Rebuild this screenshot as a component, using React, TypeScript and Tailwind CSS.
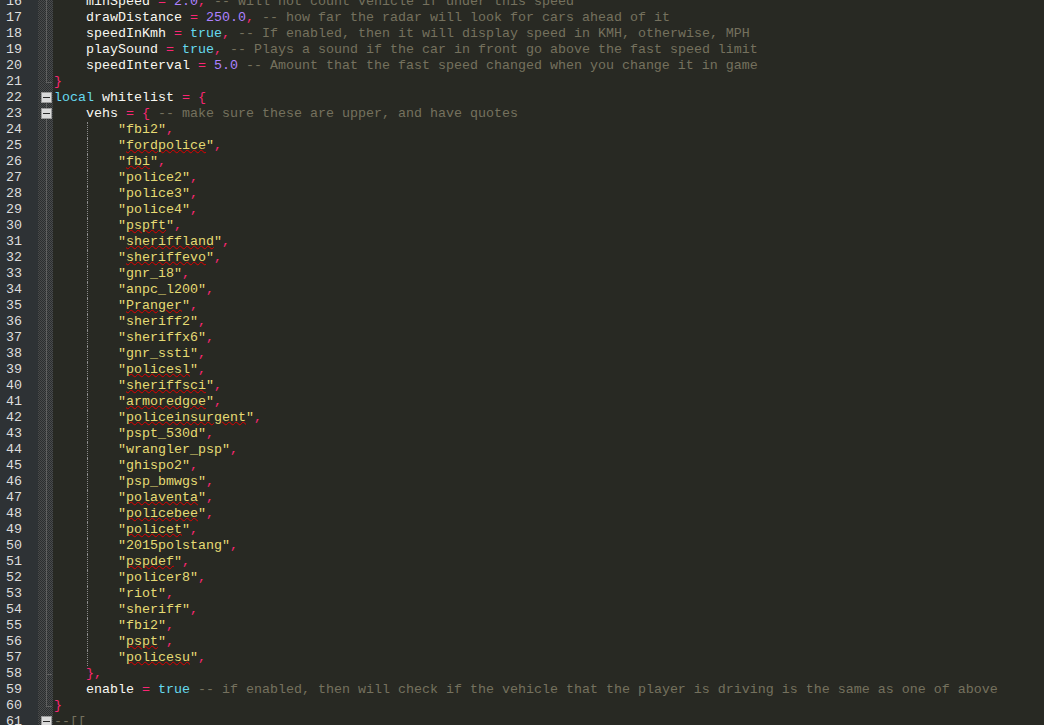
import type { ReactNode } from "react";

type Tok = [string, string?];
type Fold = "line" | "end" | "endIn" | "box" | "boxIn" | "none";

const C: Record<string, string> = {
  id: "text-[#f8f8f2]",
  op: "text-[#f92672]",
  num: "text-[#ae81ff]",
  kw: "text-[#66d9ef]",
  cm: "text-[#75715e]",
  str: "text-[#e6db74]",
};

// strings in the vehs table, second value = spell checker squiggle
const vehs: [string, boolean][] = [
  ["fbi2", false],
  ["fordpolice", true],
  ["fbi", true],
  ["police2", false],
  ["police3", false],
  ["police4", false],
  ["pspft", true],
  ["sheriffland", true],
  ["sheriffevo", true],
  ["gnr_i8", false],
  ["anpc_l200", false],
  ["Pranger", true],
  ["sheriff2", false],
  ["sheriffx6", false],
  ["gnr_ssti", false],
  ["policesl", true],
  ["sheriffsci", true],
  ["armoredgoe", true],
  ["policeinsurgent", true],
  ["pspt_530d", false],
  ["wrangler_psp", false],
  ["ghispo2", false],
  ["psp_bmwgs", false],
  ["polaventa", true],
  ["policebee", true],
  ["policet", true],
  ["2015polstang", false],
  ["pspdef", true],
  ["policer8", false],
  ["riot", false],
  ["sheriff", false],
  ["fbi2", false],
  ["pspt", true],
  ["policesu", true],
];

function FoldMark({ kind }: { kind: Fold }) {
  const line = "#5e5e5e";
  return (
    <svg width="15" height="16" className="block">
      {(kind === "line" || kind === "endIn") && <rect x="8" y="0" width="1" height="16" fill={line} />}
      {kind === "end" && <rect x="8" y="0" width="1" height="9" fill={line} />}
      {(kind === "end" || kind === "endIn") && <rect x="9" y="8" width="5" height="1" fill={line} />}
      {kind === "boxIn" && <rect x="8" y="0" width="1" height="3" fill={line} />}
      {(kind === "box" || kind === "boxIn") && (
        <>
          <rect x="8" y="13" width="1" height="3" fill={line} />
          <rect x="3.5" y="2.5" width="10" height="10" fill="#dadada" stroke="#9a9a9a" />
          <rect x="5" y="7" width="7" height="1" fill="#2a2a2a" />
        </>
      )}
    </svg>
  );
}

function Row({ n, fold, guide, children }: { n: number; fold: Fold; guide?: boolean; children: ReactNode }) {
  return (
    <div className="flex h-[16px] leading-[16px]">
      <div className="w-[38px] shrink-0 bg-[#2e3235] pl-[6px] text-[#dedede]">{n}</div>
      <div className="w-[15px] shrink-0 bg-[repeating-conic-gradient(#494b4c_0_25%,#2c2e2f_0_50%)] bg-[length:2px_2px]">
        {fold !== "none" && <FoldMark kind={fold} />}
      </div>
      <div className="flex-1 whitespace-pre pl-[1px]">
        {guide && (
          <>
            <span className="inline-block w-[32px]" />
            <span className="inline-block h-[16px] w-[31px] ml-[1px] border-l border-dotted border-[#8a8a8a] align-top" />
          </>
        )}
        {children}
      </div>
    </div>
  );
}

function Toks({ toks }: { toks: Tok[] }) {
  return (
    <>
      {toks.map(([s, k], i) => (
        <span key={i} className={C[k ?? "id"]}>
          {s}
        </span>
      ))}
    </>
  );
}

export default function App() {
  const top: { n: number; fold: Fold; toks: Tok[] }[] = [
    { n: 16, fold: "line", toks: [["    minSpeed "], ["=", "op"], [" "], ["2.0", "num"], [",", "op"], [" -- will not count vehicle if under this speed", "cm"]] },
    { n: 17, fold: "line", toks: [["    drawDistance "], ["=", "op"], [" "], ["250.0", "num"], [",", "op"], [" -- how far the radar will look for cars ahead of it", "cm"]] },
    { n: 18, fold: "line", toks: [["    speedInKmh "], ["=", "op"], [" "], ["true", "kw"], [",", "op"], [" -- If enabled, then it will display speed in KMH, otherwise, MPH", "cm"]] },
    { n: 19, fold: "line", toks: [["    playSound "], ["=", "op"], [" "], ["true", "kw"], [",", "op"], [" -- Plays a sound if the car in front go above the fast speed limit", "cm"]] },
    { n: 20, fold: "line", toks: [["    speedInterval "], ["=", "op"], [" "], ["5.0", "num"], [" -- Amount that the fast speed changed when you change it in game", "cm"]] },
    { n: 21, fold: "end", toks: [["}", "op"]] },
    { n: 22, fold: "box", toks: [["local", "kw"], [" whitelist "], ["=", "op"], [" "], ["{", "op"]] },
    { n: 23, fold: "boxIn", toks: [["    vehs "], ["=", "op"], [" "], ["{", "op"], [" -- make sure these are upper, and have quotes", "cm"]] },
  ];

  const bottom: { n: number; fold: Fold; toks: Tok[] }[] = [
    { n: 58, fold: "endIn", toks: [["    "], ["}", "op"], [",", "op"]] },
    { n: 59, fold: "line", toks: [["    enable "], ["=", "op"], [" "], ["true", "kw"], [" -- if enabled, then will check if the vehicle that the player is driving is the same as one of above", "cm"]] },
    { n: 60, fold: "end", toks: [["}", "op"]] },
    { n: 61, fold: "box", toks: [["--[[", "cm"]] },
  ];

  return (
    <div className="h-screen overflow-hidden bg-[#282923] font-['Liberation_Mono','Courier_New',monospace] text-[13.333px]">
      <div className="-mt-[6px]">
        {top.map((r) => (
          <Row key={r.n} n={r.n} fold={r.fold}>
            <Toks toks={r.toks} />
          </Row>
        ))}
        {vehs.map(([name, squiggle], i) => (
          <Row key={name + i} n={24 + i} fold="line" guide>
            <span className={C.str}>
              "
              <span className={squiggle ? "underline decoration-wavy decoration-[#e00000] decoration-1 underline-offset-[0px]" : ""}>
                {name}
              </span>
              "
            </span>
            <span className={C.op}>,</span>
          </Row>
        ))}
        {bottom.map((r) => (
          <Row key={r.n} n={r.n} fold={r.fold}>
            <Toks toks={r.toks} />
          </Row>
        ))}
      </div>
    </div>
  );
}
